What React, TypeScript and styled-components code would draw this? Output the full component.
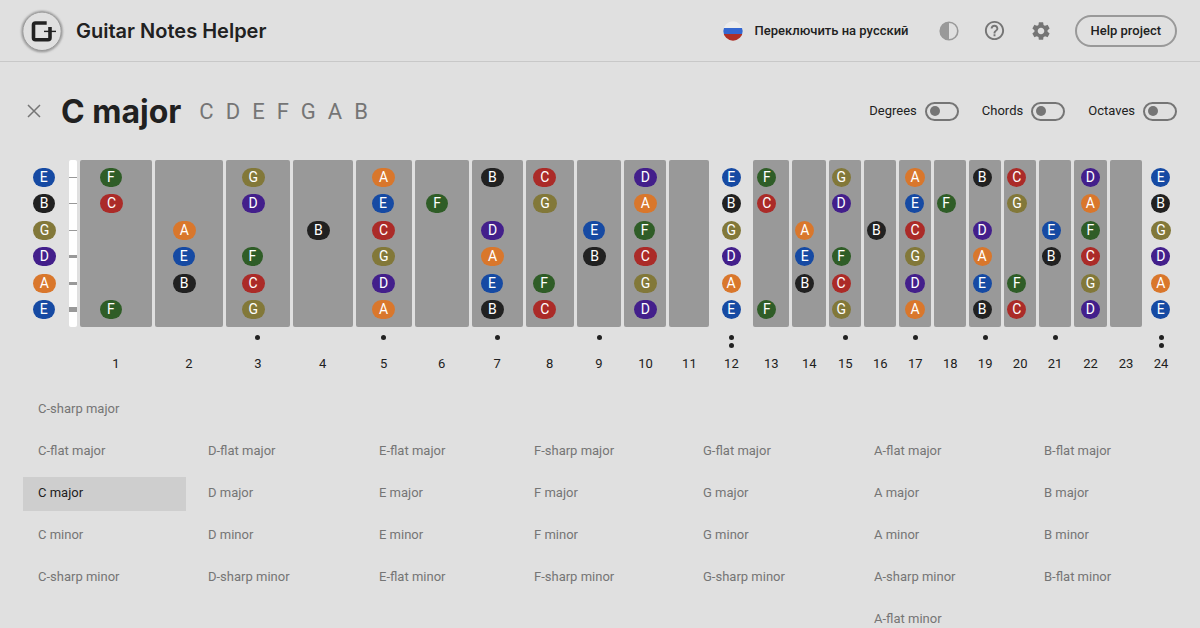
import React from 'react';
import styled, { createGlobalStyle } from 'styled-components';
import { MdHelpOutline, MdSettings } from 'react-icons/md';

const GlobalStyle = createGlobalStyle`
  *, *::before, *::after { box-sizing: border-box; }
  body {
    margin: 0;
    background: #e0e0e0;
    color: #212121;
    font: 400 13px/20px Roboto, "Liberation Sans", sans-serif;
  }
  button { font: inherit; color: inherit; border: 0; padding: 0; background: none; cursor: pointer; }
`;

const Header = styled.header`
  display: flex;
  align-items: center;
  justify-content: space-between;
  height: 62px;
  padding: 0 23px 0 18px;
  border-bottom: 1px solid #c8c8c8;
`;

const Brand = styled.a`
  display: flex;
  align-items: center;
  gap: 10px;
  color: inherit;
  text-decoration: none;
  font: 600 20px/24px Inter, sans-serif;
`;

const BrandName = styled.span`
  padding-top: 1px;
`;

const Logo = styled.svg`
  width: 48px;
  height: 48px;
`;

const Actions = styled.div`
  display: flex;
  align-items: center;
  gap: 22px;
`;

const LanguageButton = styled.button`
  display: flex;
  align-items: center;
  gap: 12px;
  margin-right: 6px;
  font-weight: 500;
`;

const Flag = styled.svg`
  width: 20px;
  height: 20px;
`;

const IconButton = styled.button`
  display: flex;
  align-items: center;
  justify-content: center;
  width: 24px;
  height: 24px;
  color: #757575;
`;

const HelpButton = styled.button`
  height: 32px;
  padding: 0 14px;
  border: 2px solid #999;
  border-radius: 16px;
  font-weight: 500;
`;

const Main = styled.main`
  padding: 26px 23px 0;
`;

const ScaleBar = styled.div`
  display: flex;
  align-items: center;
  justify-content: space-between;
  height: 46px;
`;

const ScaleInfo = styled.div`
  display: flex;
  align-items: center;
`;

const CloseButton = styled.button`
  display: flex;
  align-items: center;
  justify-content: center;
  width: 22px;
  height: 22px;
  margin-right: 16px;
`;

const ScaleTitle = styled.h1`
  margin: 0 18px 0 0;
  padding-top: 2px;
  font: 700 32px/40px Inter, sans-serif;
`;

const ScaleNotes = styled.div`
  display: flex;
  gap: 12px;
  padding-top: 2px;
  color: #757575;
  font-size: 22px;
  line-height: 28px;
`;

const Toggles = styled.div`
  display: flex;
  gap: 23px;
`;

const ToggleLabel = styled.label`
  display: flex;
  align-items: center;
  gap: 8px;
`;

const Switch = styled.input`
  appearance: none;
  display: flex;
  align-items: center;
  width: 34px;
  height: 19px;
  margin: 0;
  padding: 0 3px;
  border: 2px solid #757575;
  border-radius: 10px;
  cursor: pointer;

  &::before {
    content: '';
    width: 10px;
    height: 10px;
    border-radius: 50%;
    background: #757575;
  }
  &:checked { justify-content: flex-end; }
`;

const Board = styled.div`
  display: grid;
  grid-template-columns:
    43px 8px 72fr 68fr 64fr 60fr 56fr 54fr 51fr 48fr 45fr 42fr 40fr 38fr
    36fr 34fr 32fr 32fr 32fr 32fr 32fr 32fr 32fr 33fr 32fr 32fr;
  column-gap: 3px;
  padding-top: 26px;
`;

const FretColumn = styled.div`
  min-width: 0;
`;

const Neck = styled.div<{ $bare?: boolean; $shift?: number }>`
  display: grid;
  grid-template-rows: repeat(6, 1fr);
  justify-content: center;
  justify-items: start;
  align-items: center;
  height: 167px;
  padding: 4px ${(p) => p.$shift ?? 0}px 4px 0;
  border-radius: 2px;
  background: ${(p) => (p.$bare ? 'none' : '#999')};
`;

const Nut = styled.div`
  display: grid;
  grid-template-rows: repeat(6, 1fr);
  align-items: center;
  height: 167px;
  padding: 4px 0;
  border-radius: 2px;
  background: #fff;
`;

const StringEnd = styled.div<{ $thickness: number }>`
  height: ${(p) => p.$thickness}px;
  background: #999;
`;

const noteColors: Record<string, string> = {
  A: '#d9772c',
  B: '#212121',
  C: '#ab2b28',
  D: '#431f8b',
  E: '#164aa3',
  F: '#2f5d27',
  G: '#827839',
};

const NoteButton = styled.button<{ $note: string; $row: number; $narrow: boolean }>`
  grid-row: ${(p) => p.$row};
  grid-column: 1;
  min-width: 19px;
  height: 19px;
  padding: 0 ${(p) => (p.$narrow ? 5 : 7)}px;
  border-radius: 10px;
  background: ${(p) => noteColors[p.$note]};
  color: #fff;
  font-size: 14px;
  line-height: 19px;
`;

const Markers = styled.div`
  display: flex;
  flex-direction: column;
  align-items: center;
  gap: 3px;
  height: 27px;
  padding-top: 8px;
`;

const Marker = styled.span`
  width: 5px;
  height: 5px;
  border-radius: 50%;
  background: #212121;
`;

const FretNumber = styled.div`
  text-align: center;
`;

const ScaleList = styled.nav`
  display: grid;
  grid-template-columns: 163fr 164fr 148fr 162fr 164fr 163fr 148fr;
  grid-auto-rows: 34px;
  gap: 8px 7px;
  padding-top: 19px;
`;

const ScaleLink = styled.a<{ $row: number; $column: number; $active: boolean }>`
  grid-row: ${(p) => p.$row};
  grid-column: ${(p) => p.$column};
  padding: 0 15px;
  line-height: 32px;
  text-decoration: none;
  white-space: nowrap;
  color: ${(p) => (p.$active ? '#212121' : '#757575')};
  background: ${(p) => (p.$active ? '#cecece' : 'none')};
`;

const chromatic = ['C', '', 'D', '', 'E', 'F', '', 'G', '', 'A', '', 'B'];
const openStrings = [4, 11, 7, 2, 9, 4];
const stringThickness = [1, 1, 1, 3, 3, 5];
const singleMarkers = [3, 5, 7, 9, 15, 17, 19, 21];
const doubleMarkers = [12, 24];

const accidentalRoom = (fret: number) => {
  if ([0, 5, 10].includes(fret % 12)) return 0;
  if (fret === 19 || fret === 20) return 6;
  return fret < 15 ? 9 : 8;
};

const scales: string[][] = [
  ['C-sharp major', 'C-flat major', 'C major', 'C minor', 'C-sharp minor'],
  ['', 'D-flat major', 'D major', 'D minor', 'D-sharp minor'],
  ['', 'E-flat major', 'E major', 'E minor', 'E-flat minor'],
  ['', 'F-sharp major', 'F major', 'F minor', 'F-sharp minor'],
  ['', 'G-flat major', 'G major', 'G minor', 'G-sharp minor'],
  ['', 'A-flat major', 'A major', 'A minor', 'A-sharp minor', 'A-flat minor'],
  ['', 'B-flat major', 'B major', 'B minor', 'B-flat minor'],
];

function Notes({ fret }: { fret: number }) {
  return (
    <>
      {openStrings.map((open, i) => {
        const note = chromatic[(open + fret) % 12];
        return note ? (
          <NoteButton key={i} type="button" $note={note} $row={i + 1} $narrow={fret > 11}>
            {note}
          </NoteButton>
        ) : null;
      })}
    </>
  );
}

function Fret({ fret }: { fret: number }) {
  const dots = doubleMarkers.includes(fret) ? 2 : singleMarkers.includes(fret) ? 1 : 0;
  return (
    <FretColumn>
      <Neck $bare={fret % 12 === 0} $shift={accidentalRoom(fret)}>
        <Notes fret={fret} />
      </Neck>
      <Markers>
        {Array.from({ length: dots }, (_, i) => (
          <Marker key={i} />
        ))}
      </Markers>
      <FretNumber>{fret}</FretNumber>
    </FretColumn>
  );
}

export default function App() {
  return (
    <>
      <GlobalStyle />
      <Header>
        <Brand href="#">
          <Logo viewBox="0 0 48 48" aria-hidden="true">
            <defs>
              <filter id="soft" x="-20%" y="-20%" width="140%" height="140%">
                <feGaussianBlur stdDeviation="1.2" />
              </filter>
            </defs>
            <circle cx="24" cy="24.5" r="19.5" fill="none" stroke="#888" strokeWidth="2" filter="url(#soft)" />
            <circle cx="24" cy="24.3" r="19.2" fill="#e0e0e0" stroke="#999" strokeWidth="1" />
            <path d="M28.7 16H17.500A2 2 0 0 0 15.500 18V30.700A2 2 0 0 0 17.500 32.700H30A2 2 0 0 0 32 30.700V20" fill="none" stroke="#212121" strokeWidth="3.600" />
            <path d="M26 24.400H38" stroke="#212121" strokeWidth="1.400" />
          </Logo>
          <BrandName>Guitar Notes Helper</BrandName>
        </Brand>
        <Actions>
          <LanguageButton type="button">
            <Flag viewBox="0 0 20 20" aria-hidden="true">
              <clipPath id="round"><circle cx="10" cy="10" r="9.700" /></clipPath>
              <g clipPath="url(#round)">
                <path d="M0 0H20V7H0Z" fill="#ececec" />
                <path d="M0 7H20V13H0Z" fill="#3467d0" />
                <path d="M0 13H20V20H0Z" fill="#ae3027" />
              </g>
            </Flag>
            Переключить на русский
          </LanguageButton>
          <IconButton type="button" aria-label="Theme">
            <svg width="24" height="24" viewBox="0 0 24 24" aria-hidden="true">
              <circle cx="12" cy="12" r="8.800" fill="none" stroke="#999" strokeWidth="1.600" />
              <path d="M12 3a9 9 0 0 0 0 18Z" fill="#999" />
            </svg>
          </IconButton>
          <IconButton type="button" aria-label="Help">
            <MdHelpOutline size={23} />
          </IconButton>
          <IconButton type="button" aria-label="Settings">
            <MdSettings size={22} />
          </IconButton>
          <HelpButton type="button">Help project</HelpButton>
        </Actions>
      </Header>
      <Main>
        <ScaleBar>
          <ScaleInfo>
            <CloseButton type="button" aria-label="Close">
              <svg width="14" height="14" viewBox="0 0 14 14" aria-hidden="true">
                <path d="M1 1 13 13M13 1 1 13" stroke="#757575" strokeWidth="1.500" />
              </svg>
            </CloseButton>
            <ScaleTitle>C major</ScaleTitle>
            <ScaleNotes>
              {['C', 'D', 'E', 'F', 'G', 'A', 'B'].map((n) => (
                <span key={n}>{n}</span>
              ))}
            </ScaleNotes>
          </ScaleInfo>
          <Toggles>
            {['Degrees', 'Chords', 'Octaves'].map((name) => (
              <ToggleLabel key={name}>
                {name}
                <Switch type="checkbox" role="switch" />
              </ToggleLabel>
            ))}
          </Toggles>
        </ScaleBar>
        <Board>
          <Neck $bare>
            <Notes fret={0} />
          </Neck>
          <Nut>
            {stringThickness.map((t, i) => (
              <StringEnd key={i} $thickness={t} />
            ))}
          </Nut>
          {Array.from({ length: 24 }, (_, i) => (
            <Fret key={i} fret={i + 1} />
          ))}
        </Board>
        <ScaleList aria-label="Scales">
          {scales.map((column, c) =>
            column.map((name, r) =>
              name ? (
                <ScaleLink key={name} href="#" $row={r + 1} $column={c + 1} $active={name === 'C major'}>
                  {name}
                </ScaleLink>
              ) : null,
            ),
          )}
        </ScaleList>
      </Main>
    </>
  );
}
